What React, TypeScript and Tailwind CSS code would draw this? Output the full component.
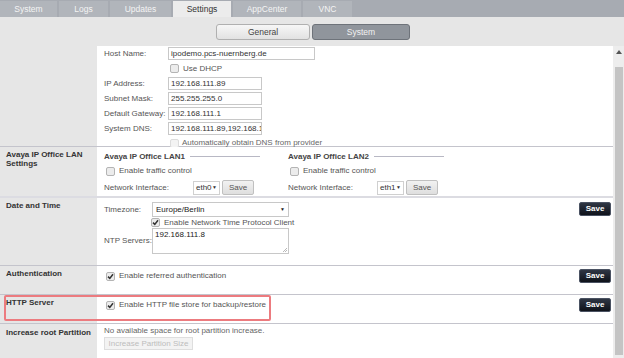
import React from "react";

const F = { fontFamily: '"Liberation Sans", Arial, sans-serif' };

function Check({ checked = false, disabled = false }: { checked?: boolean; disabled?: boolean }) {
  return (
    <span
      className={`inline-flex items-center justify-center w-[9px] h-[9px] rounded-[2px] border ${
        disabled ? "border-[#dcdcdc] bg-[#f3f3f3]" : "border-[#b4b4b4] bg-[#ececec]"
      }`}
    >
      {checked && (
        <svg width="7" height="7" viewBox="0 0 7 7">
          <path d="M1 3.6 L2.8 5.4 L6 1.3" stroke="#333" strokeWidth="1.5" fill="none" />
        </svg>
      )}
    </span>
  );
}

function DarkSave() {
  return (
    <div className="w-[32px] h-[14px] rounded-[2px] border border-[#4a5262] bg-gradient-to-b from-[#2f3644] to-[#0f131b] text-white text-[8px] font-bold flex items-center justify-center">
      Save
    </div>
  );
}

function LightSave() {
  return (
    <div className="w-[32px] h-[15px] rounded-[2px] border border-[#c0c0c0] bg-gradient-to-b from-[#f2f2f2] to-[#dedede] text-[#555] text-[8px] flex items-center justify-center">
      Save
    </div>
  );
}

function Field({ label, value, w = 94 }: { label: string; value: string; w?: number }) {
  return (
    <div className="flex items-center h-[15px]">
      <div className="w-[64px] text-[#555]">{label}</div>
      <div
        className="h-[13px] border border-[#c8c8c8] bg-white text-[#333] px-[2px] flex items-center overflow-hidden whitespace-nowrap"
        style={{ width: w }}
      >
        {value}
      </div>
    </div>
  );
}

function LanBlock({ title, iface }: { title: string; iface: string }) {
  return (
    <div className="w-[156px] flex flex-col">
      <div className="flex items-center h-[13px] mt-[1px]">
        <span className="font-bold text-[#444]">{title}</span>
        <span className="flex-1 h-px bg-[#b8b8c4] ml-[5px]" />
      </div>
      <div className="flex items-center gap-[4px] ml-[2px] mt-[2px] h-[12px] text-[#555]">
        <Check />
        <span>Enable traffic control</span>
      </div>
      <div className="flex items-center mt-[3px] text-[#555]">
        <span className="w-[89px]">Network Interface:</span>
        <div className="w-[27px] h-[14px] border border-[#d0d0d0] bg-white text-[#333] flex items-center justify-between px-[2px]">
          <span>{iface}</span>
          <span className="text-[5px]">▼</span>
        </div>
        <div className="ml-[2px]">
          <LightSave />
        </div>
      </div>
    </div>
  );
}

function Row({
  label,
  h,
  children,
  border = "border-[#c4c4cc]",
}: {
  label?: React.ReactNode;
  h: number;
  children?: React.ReactNode;
  border?: string;
}) {
  return (
    <div className={`flex border-b ${border}`} style={{ height: h }}>
      <div className="w-[97px] shrink-0 bg-[#e6e6e6] px-[6px] pt-[3px] font-bold text-[#333] leading-[9px]">
        {label}
      </div>
      <div className="flex-1 bg-white relative">{children}</div>
    </div>
  );
}

export default function App() {
  const tabs = [
    { t: "System", w: 57 },
    { t: "Logs", w: 49 },
    { t: "Updates", w: 61 },
    { t: "Settings", w: 58, active: true },
    { t: "AppCenter", w: 68 },
    { t: "VNC", w: 49 },
  ];
  return (
    <div className="w-[624px] h-[358px] overflow-hidden bg-[#e6e6e6] text-[8px] relative" style={F}>
      {/* top tabs */}
      <div className="h-[17px] bg-[#a7abb2] flex items-end gap-[2px]">
        {tabs.map((t) => (
          <div
            key={t.t}
            className={`h-[16px] flex items-center justify-center text-[8.5px] ${
              t.active ? "bg-[#ececec] text-[#333]" : "bg-[#b1b5bb] text-[#f4f4f4]"
            }`}
            style={{ width: t.w }}
          >
            {t.t}
          </div>
        ))}
      </div>
      {/* subtabs */}
      <div className="h-[29px] flex items-start pt-[7px] pl-[216px] gap-[2px]">
        <div className="w-[94px] h-[16px] rounded-[3px] border border-[#b0b0b0] bg-gradient-to-b from-[#f7f7f7] to-[#e2e2e2] text-[#444] text-[8.5px] flex items-center justify-center">
          General
        </div>
        <div className="w-[98px] h-[16px] rounded-[3px] border border-[#6e737a] bg-[#90959c] text-[#f2f2f2] text-[8.5px] flex items-center justify-center">
          System
        </div>
      </div>
      {/* main */}
      <div className="flex">
        <div className="flex-1 flex flex-col">
          <Row h={101}>
            <div className="pl-[7px] pt-0 flex flex-col">
              <Field label="Host Name:" value="ipodemo.pcs-nuernberg.de" w={147} />
              <div className="flex items-center gap-[4px] h-[13px] ml-[66px] mt-[1px] text-[#555]">
                <Check />
                <span>Use DHCP</span>
              </div>
              <div className="mt-[1px]">
                <Field label="IP Address:" value="192.168.111.89" />
                <Field label="Subnet Mask:" value="255.255.255.0" />
                <Field label="Default Gateway:" value="192.168.111.1" />
                <Field label="System DNS:" value="192.168.111.89,192.168.111.254" />
              </div>
              <div className="flex items-center gap-[3px] h-[12px] ml-[66px] mt-[1px] text-[#666]">
                <Check disabled />
                <span>Automatically obtain DNS from provider</span>
              </div>
            </div>
          </Row>
          <Row h={51} label="Avaya IP Office LAN Settings" border="border-[#dcdce2] border-b-[2px]">
            <div className="pl-[7px] pt-[2px] flex gap-[28px]">
              <LanBlock title="Avaya IP Office LAN1" iface="eth0" />
              <LanBlock title="Avaya IP Office LAN2" iface="eth1" />
            </div>
          </Row>
          <Row h={68} label="Date and Time">
            <div className="pl-[7px] pt-[4px] flex justify-between pr-[2px]">
              <div className="flex flex-col">
                <div className="flex items-center h-[15px]">
                  <span className="w-[48px] text-[#555]">Timezone:</span>
                  <div className="w-[137px] h-[15px] border border-[#c8c8c8] bg-white text-[#222] flex items-center justify-between px-[3px]">
                    <span>Europe/Berlin</span>
                    <span className="text-[5px]">▼</span>
                  </div>
                </div>
                <div className="flex items-center gap-[4px] ml-[47px] h-[11px] text-[#555]">
                  <Check checked />
                  <span>Enable Network Time Protocol Client</span>
                </div>
                <div className="flex items-center h-[26px]">
                  <span className="w-[48px] text-[#555]">NTP Servers:</span>
                  <div className="w-[137px] h-[26px] border border-[#c8c8c8] bg-white text-[#222] px-[2px] relative">
                    <span className="leading-[10px]">192.168.111.8</span>
                    <svg className="absolute right-[1px] bottom-[1px]" width="5" height="5" viewBox="0 0 5 5">
                      <path d="M1 5 L5 1 M3 5 L5 3" stroke="#999" strokeWidth="0.7" />
                    </svg>
                  </div>
                </div>
              </div>
              <DarkSave />
            </div>
          </Row>
          <Row h={29} label="Authentication">
            <div className="pl-[9px] pr-[2px] pt-[3px] flex justify-between">
              <div className="flex items-center gap-[4px] h-[14px] text-[#555]">
                <Check checked />
                <span>Enable referred authentication</span>
              </div>
              <DarkSave />
            </div>
          </Row>
          <Row h={29} label="HTTP Server">
            <div className="pl-[9px] pr-[2px] pt-[3px] flex justify-between">
              <div className="flex items-center gap-[4px] h-[14px] text-[#555]">
                <Check checked />
                <span>Enable HTTP file store for backup/restore</span>
              </div>
              <DarkSave />
            </div>
          </Row>
          <div className="flex h-[40px]">
            <div className="w-[97px] shrink-0 bg-[#e6e6e6] px-[6px] pt-[3px] font-bold text-[#333]">
              Increase root Partition
            </div>
            <div className="flex-1 bg-white pl-[7px] pt-[2px] flex flex-col items-start leading-[10px]">
              <span className="text-[#666]">No available space for root partition increase.</span>
              <div className="mt-[1px] w-[89px] h-[13px] border border-[#dedede] bg-[#f3f3f3] text-[#bdbdbd] flex items-center justify-center">
                Increase Partition Size
              </div>
            </div>
          </div>
        </div>
        {/* scrollbar */}
        <div className="w-[11px] bg-[#ededed] flex flex-col items-center">
          <svg className="mt-[4px]" width="6" height="4" viewBox="0 0 6 4">
            <path d="M0 4 L3 0 L6 4 Z" fill="#555" />
          </svg>
          <div className="mt-[13px] w-[8px] h-[288px] bg-[#c4c4c4]" />
        </div>
      </div>
      {/* highlight box */}
      <div className="absolute left-[4px] top-[295px] w-[267px] h-[26px] border-2 border-[#ec7b7f] rounded-[2px] pointer-events-none" />
    </div>
  );
}
